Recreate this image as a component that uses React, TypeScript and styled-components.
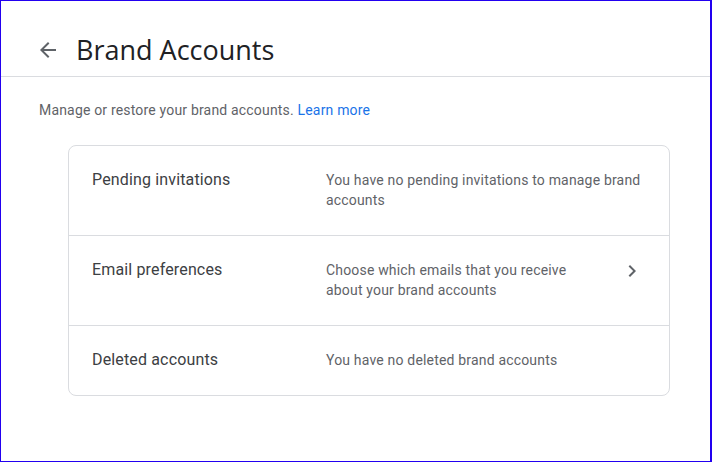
import React from 'react'
import styled, { createGlobalStyle } from 'styled-components'

const GlobalStyle = createGlobalStyle`
  html, body {
    margin: 0;
    padding: 0;
    background: #fff;
  }
  body {
    font-family: Roboto, "Liberation Sans", Arial, sans-serif;
  }
`

const Frame = styled.div`
  box-sizing: border-box;
  width: 712px;
  height: 462px;
  border-style: solid;
  border-color: #2200f0;
  border-width: 1px 2px 1px 1px;
  background: #fff;
  overflow: hidden;
`

const Header = styled.header`
  box-sizing: border-box;
  display: flex;
  align-items: center;
  height: 76px;
  padding: 22px 0 0 35px;
  border-bottom: 1px solid #dadce0;
`

const BackButton = styled.button`
  display: flex;
  align-items: center;
  justify-content: center;
  width: 24px;
  height: 24px;
  padding: 0;
  margin-right: 16px;
  border: none;
  background: none;
  color: #5f6368;
  cursor: pointer;
`

const Title = styled.h1`
  margin: 0;
  font-family: "Open Sans", Roboto, sans-serif;
  font-size: 27px;
  line-height: 36px;
  font-weight: 400;
  color: #202124;
`

const Main = styled.main`
  padding: 23px 40px 0 38px;
`

const Intro = styled.p`
  margin: 0 0 25px;
  font-size: 14px;
  line-height: 20px;
  letter-spacing: 0.18px;
  color: #5f6368;

  a {
    color: #1a73e8;
    text-decoration: none;
  }
`

const Card = styled.section`
  margin-left: 29px;
  border: 1px solid #dadce0;
  border-radius: 8px;
`

const Row = styled.div<{ $last?: boolean }>`
  display: grid;
  grid-template-columns: 234px 1fr 24px;
  align-items: start;
  padding: 24px 23px 25px 23px;
  border-bottom: ${({ $last }) => ($last ? 'none' : '1px solid #dadce0')};
`

const Label = styled.div`
  font-size: 16px;
  line-height: 20px;
  letter-spacing: 0.15px;
  color: #3c4043;
`

const Value = styled.div<{ $wide?: boolean }>`
  grid-column: ${({ $wide }) => ($wide ? '2 / 4' : '2 / 3')};
  padding-right: ${({ $wide }) => ($wide ? '0' : '24px')};
  font-size: 14px;
  line-height: 20px;
  letter-spacing: 0.18px;
  color: #5f6368;
`

const Chevron = styled.div`
  display: flex;
  align-items: center;
  justify-content: center;
  margin: -1px 2px 0 -2px;
  color: #5f6368;
`

const ArrowBack = () => (
  <svg width="24" height="24" viewBox="0 0 24 24" fill="currentColor">
    <path d="M20 11H7.83l5.59-5.59L12 4l-8 8 8 8 1.41-1.41L7.83 13H20v-2z" />
  </svg>
)

const ChevronRight = () => (
  <svg width="24" height="24" viewBox="0 0 24 24" fill="currentColor">
    <path d="M10 6L8.59 7.41 13.17 12l-4.58 4.59L10 18l6-6z" />
  </svg>
)

export default function App() {
  return (
    <>
      <GlobalStyle />
      <Frame>
        <Header>
          <BackButton aria-label="Back">
            <ArrowBack />
          </BackButton>
          <Title>Brand Accounts</Title>
        </Header>
        <Main>
          <Intro>
            Manage or restore your brand accounts. <a href="#">Learn more</a>
          </Intro>
          <Card>
            <Row>
              <Label>Pending invitations</Label>
              <Value $wide>You have no pending invitations to manage brand accounts</Value>
            </Row>
            <Row>
              <Label>Email preferences</Label>
              <Value>Choose which emails that you receive about your brand accounts</Value>
              <Chevron>
                <ChevronRight />
              </Chevron>
            </Row>
            <Row $last>
              <Label>Deleted accounts</Label>
              <Value $wide>You have no deleted brand accounts</Value>
            </Row>
          </Card>
        </Main>
      </Frame>
    </>
  )
}
